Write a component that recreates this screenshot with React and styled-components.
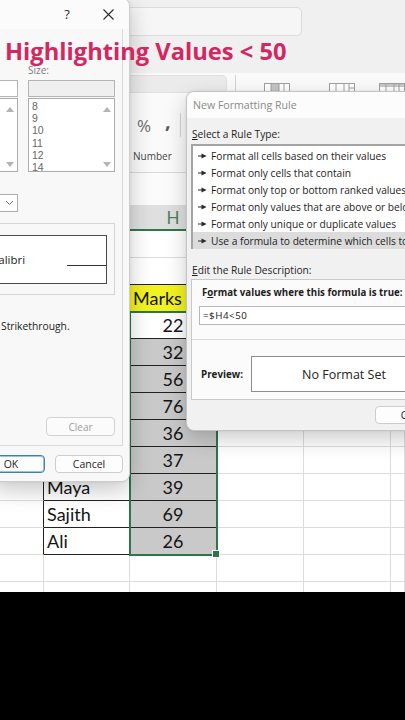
import React from 'react';
import styled, { createGlobalStyle } from 'styled-components';

const Global = createGlobalStyle`
  html, body { margin: 0; padding: 0; background: #000; }
  body { width: 405px; height: 720px; overflow: hidden; font-family: "Open Sans", "Noto Sans", sans-serif; }
  #root { width: 405px; height: 720px; }
`;

const Screen = styled.div`
  position: relative;
  width: 405px;
  height: 720px;
  overflow: hidden;
  background: #000;
`;

/* ---------- Excel window ---------- */
const Excel = styled.div`
  position: relative;
  height: 592px;
  background: #f0f0f0;
  display: flex;
  flex-direction: column;
  overflow: hidden;
`;

const TopBar = styled.div`
  flex: none;
  height: 73px;
  box-sizing: border-box;
  padding: 7px 0 0 110px;
`;

const SearchBox = styled.div`
  width: 192px;
  height: 29px;
  box-sizing: border-box;
  border: 1px solid #dcdcdc;
  border-radius: 5px;
  background: #f6f6f6;
`;

const Ribbon = styled.div`
  flex: none;
  height: 100px;
  box-sizing: border-box;
  background: #fafafa;
  border-bottom: 1px solid #d9d9d9;
  display: flex;
  align-items: flex-start;
  padding-left: 130px;
`;

const NumberGroup = styled.div`
  width: 98px;
  display: flex;
  flex-direction: column;
`;

const FormatBox = styled.div`
  height: 16px;
  margin-top: 2px;
  background: #ebebeb;
  border: 1px solid #e0e0e0;
  border-left: none;
  border-radius: 0 5px 5px 0;
`;

const SymbolRow = styled.div`
  display: flex;
  align-items: center;
  height: 24px;
  margin-top: 20px;
`;

const Percent = styled.span`
  margin-left: 7px;
  font-size: 17px;
  color: #6e6e6e;
  line-height: 1;
`;

const Comma = styled.span`
  margin-left: 14px;
  font-size: 20px;
  font-weight: 700;
  color: #5a5a5a;
  line-height: 1;
  margin-top: -8px;
`;

const RibbonDivider = styled.div`
  width: 1px;
  height: ${p => p.$h || 24}px;
  background: #d3d3d3;
  margin-left: ${p => p.$ml || 0}px;
  margin-top: ${p => p.$mt || 0}px;
  flex: none;
`;

const GroupLabel = styled.div`
  margin-top: 12px;
  margin-left: 3px;
  font-size: 10px;
  line-height: 14px;
  color: #444;
`;

const RibbonIcon = styled.svg`
  flex: none;
  margin-top: 10px;
  margin-left: ${p => p.$ml}px;
`;

const FormulaArea = styled.div`
  flex: none;
  height: 32px;
  background: #fbfbfb;
`;

const COLS = '44px 86px 87px 87px 87px 1fr';

const ColHeaders = styled.div`
  flex: none;
  display: grid;
  grid-template-columns: ${COLS};
  height: 26px;
`;

const HeaderCell = styled.div`
  box-sizing: border-box;
  background: ${p => (p.$sel ? '#dfdfdf' : '#ededed')};
  border-right: 1px solid #d2d2d2;
  border-bottom: 2px solid ${p => (p.$sel ? '#2b7a4f' : '#d2d2d2')};
  display: flex;
  align-items: center;
  justify-content: center;
  font-family: Lato, "Open Sans", sans-serif;
  font-size: 17px;
  color: ${p => (p.$sel ? '#4b7f60' : '#666')};
`;

const Grid = styled.div`
  position: relative;
  display: grid;
  grid-template-columns: ${COLS};
  grid-auto-rows: 27px;
  background: #fff;
`;

const Cell = styled.div`
  box-sizing: border-box;
  background: ${p => p.$fill};
  border-right: 1px solid ${p => (p.$rd ? '#222' : '#dddddd')};
  border-bottom: 1px solid ${p => (p.$bd ? '#222' : '#dddddd')};
  font-family: Lato, "Open Sans", sans-serif;
  font-size: 18px;
  line-height: 26px;
  color: #141414;
  padding: 0 3px;
  text-align: ${p => (p.$num ? 'center' : 'left')};
  white-space: nowrap;
  overflow: hidden;
`;

const SelectionFrame = styled.div`
  position: absolute;
  left: 129px;
  top: 80px;
  width: 89px;
  height: 245px;
  box-sizing: border-box;
  border: 2px solid #2a774d;
  pointer-events: none;
`;

const FillHandle = styled.div`
  position: absolute;
  right: -4px;
  bottom: -4px;
  width: 6px;
  height: 6px;
  background: #2a774d;
  border: 1px solid #fff;
`;

/* ---------- Format Cells dialog (left) ---------- */
const FontDialog = styled.div`
  position: absolute;
  left: -8px;
  top: -2px;
  width: 138px;
  height: 484px;
  box-sizing: border-box;
  background: #f8f8f8;
  border: 1px solid #cdcdcd;
  border-radius: 8px;
  box-shadow: 0 8px 22px rgba(0, 0, 0, 0.22), 0 0 3px rgba(0, 0, 0, 0.08);
  display: flex;
  flex-direction: column;
  overflow: hidden;
  z-index: 3;
`;

const DlgTitleBar = styled.div`
  flex: none;
  height: 30px;
  display: flex;
  justify-content: flex-end;
  align-items: center;
  gap: 15px;
  padding-right: 8px;
  background: #fbfbfb;
`;

const TitleBtn = styled.div`
  width: 26px;
  height: 24px;
  display: flex;
  align-items: center;
  justify-content: center;
  font-size: 13px;
  color: #2c2c2c;
`;

const TabPage = styled.div`
  flex: 1;
  margin-right: 6px;
  border-right: 1px solid #dadada;
  border-bottom: 1px solid #dadada;
  padding: 35px 7px 0 0;
  display: flex;
  flex-direction: column;
`;

const FontRow = styled.div`
  display: grid;
  grid-template-columns: 25px 87px;
  column-gap: 10px;
`;

const FieldCol = styled.div`
  display: flex;
  flex-direction: column;
`;

const FieldLabel = styled.div`
  height: 12px;
  margin-bottom: 4px;
  font-size: 10px;
  line-height: 12px;
  color: #7a7a7a;
`;

const FieldInput = styled.div`
  height: 17px;
  box-sizing: border-box;
  border: 1px solid #b4b4b4;
  background: ${p => (p.$gray ? '#efefef' : '#fff')};
`;

const ListBox = styled.div`
  height: 74px;
  margin-top: 1px;
  box-sizing: border-box;
  border: 1px solid #adadad;
  background: #fff;
  display: flex;
  overflow: hidden;
`;

const ListItems = styled.div`
  flex: 1;
  padding: 1px 0 0 3px;
  display: flex;
  flex-direction: column;
`;

const ListItem = styled.div`
  font-family: "Liberation Sans", Arial, sans-serif;
  font-size: 10.5px;
  line-height: 12.2px;
  height: 12.2px;
  color: #666;
`;

const ScrollBar = styled.div`
  flex: none;
  width: 14px;
  display: flex;
  flex-direction: column;
  align-items: center;
  justify-content: space-between;
  padding: 8px 0 4px;
`;

const DropBox = styled.div`
  width: 25px;
  height: 18px;
  margin-top: 22px;
  box-sizing: border-box;
  border: 1px solid #adadad;
  background: #fff;
  display: flex;
  align-items: center;
  justify-content: flex-end;
  padding-right: 3px;
`;

const PreviewGroup = styled.div`
  height: 72px;
  margin-top: 11px;
  box-sizing: border-box;
  border: 1px solid #d5d5d5;
  padding: 11px 7px 0 0;
`;

const PreviewBox = styled.div`
  height: 49px;
  box-sizing: border-box;
  border: 1px solid #4a4a4a;
  background: #fff;
  display: flex;
  align-items: center;
`;

const PreviewFont = styled.span`
  margin-left: -4px;
  font-size: 11.5px;
  color: #222;
`;

const PreviewLine = styled.div`
  width: 39px;
  height: 1px;
  margin-left: auto;
  margin-top: 11px;
  background: #333;
`;

const NoteText = styled.div`
  margin-top: 25px;
  margin-left: 8px;
  font-size: 10.3px;
  line-height: 12px;
  color: #222;
  white-space: nowrap;
`;

const ClearBtn = styled.div`
  align-self: flex-end;
  margin-top: auto;
  margin-bottom: 9px;
  width: 69px;
  height: 19px;
  box-sizing: border-box;
  border: 1px solid #d2d2d2;
  border-radius: 4px;
  background: #fbfbfb;
  color: #9d9d9d;
  font-size: 10px;
  display: flex;
  align-items: center;
  justify-content: center;
`;

const DlgFooter = styled.div`
  flex: none;
  height: 35px;
  box-sizing: border-box;
  display: flex;
  justify-content: flex-end;
  align-items: flex-start;
  gap: 10px;
  padding: 9px 6px 0 0;
`;

const DlgButton = styled.div`
  width: ${p => p.$w || 68}px;
  height: 18px;
  box-sizing: border-box;
  border: 1px solid ${p => (p.$primary ? '#3f80b0' : '#cdcdcd')};
  box-shadow: ${p => (p.$primary ? 'inset 0 0 0 1px #9cc3de' : 'none')};
  border-radius: 4px;
  background: #fdfdfd;
  font-size: 10.5px;
  color: #1e1e1e;
  display: flex;
  align-items: center;
  justify-content: center;
  flex: none;
`;

/* ---------- New Formatting Rule dialog (right) ---------- */
const RuleDialog = styled.div`
  position: absolute;
  left: 186px;
  top: 91px;
  width: 270px;
  height: 340px;
  box-sizing: border-box;
  background: #f1f1f1;
  border: 1px solid #c4c4c4;
  border-radius: 8px;
  box-shadow: 0 8px 22px rgba(0, 0, 0, 0.2), 0 0 3px rgba(0, 0, 0, 0.08);
  display: flex;
  flex-direction: column;
  overflow: hidden;
  z-index: 3;
`;

const RuleTitle = styled.div`
  flex: none;
  height: 26px;
  background: #fcfcfc;
  padding-left: 6px;
  display: flex;
  align-items: center;
  font-size: 10.6px;
  color: #8a8a8a;
`;

const RuleBody = styled.div`
  padding: 10px 0 0 4px;
  display: flex;
  flex-direction: column;
`;

const SectionLabel = styled.div`
  margin-left: 1px;
  margin-top: ${p => p.$mt || 0}px;
  font-size: ${p => (p.$bold ? 9.7 : 10.2)}px;
  line-height: 12px;
  color: #1d1d1d;
  white-space: nowrap;
  font-weight: ${p => (p.$bold ? 700 : 400)};
`;

const RuleList = styled.div`
  margin-top: 4px;
  height: 105px;
  box-sizing: border-box;
  border: 2px solid #a4a4a4;
  background: #fff;
  padding-top: 1px;
  display: flex;
  flex-direction: column;
`;

const RuleItem = styled.div`
  height: 17px;
  flex: none;
  display: flex;
  align-items: center;
  gap: 4px;
  padding-left: 5px;
  background: ${p => (p.$sel ? '#dcdcdc' : 'transparent')};
  font-size: 10.2px;
  color: #1d1d1d;
  white-space: nowrap;
`;

const ItemArrow = styled.svg`
  flex: none;
  width: 9px;
  height: 6px;
`;

const DescGroup = styled.div`
  margin-top: 3px;
  height: 121px;
  box-sizing: border-box;
  border: 1px solid #c9c9c9;
  background: #fbfbfb;
  padding: 7px 0 0 9px;
  display: flex;
  flex-direction: column;
`;

const FormulaInput = styled.div`
  margin-top: 7px;
  margin-left: -2px;
  height: 19px;
  box-sizing: border-box;
  border: 1px solid #b7b7b7;
  background: #fff;
  padding-left: 3px;
  display: flex;
  align-items: center;
  font-size: 9.8px;
  letter-spacing: 0.5px;
  color: #222;
`;

const Separator = styled.div`
  margin-top: 14px;
  margin-left: -9px;
  height: 1px;
  background: #d8d8d8;
`;

const PreviewRow = styled.div`
  margin-top: 16px;
  height: 36px;
  display: flex;
  align-items: center;
`;

const PreviewLabel = styled.div`
  width: 50px;
  flex: none;
  font-size: 9.8px;
  font-weight: 700;
  color: #1d1d1d;
`;

const RulePreview = styled.div`
  width: 186px;
  height: 36px;
  flex: none;
  box-sizing: border-box;
  border: 1px solid #8e8e8e;
  background: #fff;
  display: flex;
  align-items: center;
  justify-content: center;
  font-size: 12.5px;
  color: #222;
`;

const RuleButtons = styled.div`
  margin-top: 6px;
  padding-left: 184px;
  display: flex;
`;

/* ---------- Headline ---------- */
const Headline = styled.div`
  position: absolute;
  left: 5px;
  top: 40px;
  z-index: 5;
  font-family: "Open Sans", "Noto Sans", sans-serif;
  font-weight: 700;
  font-size: 23.7px;
  line-height: 1;
  color: #d3275f;
  white-space: nowrap;
`;

/* ---------- icons ---------- */
const Arrow = () => (
  <ItemArrow viewBox="0 0 9 6">
    <path d="M0 3h4" stroke="#2a2a2a" strokeWidth="1.2" />
    <path d="M3.5 0.6 L8.6 3 L3.5 5.4Z" fill="#2a2a2a" />
  </ItemArrow>
);

const Tri = ({ down }) => (
  <svg width="8" height="5" viewBox="0 0 8 5">
    <path d={down ? 'M0 0 L8 0 L4 5Z' : 'M0 5 L8 5 L4 0Z'} fill="#b4b4b4" />
  </svg>
);

const Chevron = () => (
  <svg width="9" height="6" viewBox="0 0 9 6">
    <polyline points="1,1 4.5,4.5 8,1" fill="none" stroke="#666" strokeWidth="1" />
  </svg>
);

const CloseX = () => (
  <svg width="11" height="11" viewBox="0 0 11 11">
    <path d="M0.5 0.5 L10.5 10.5 M10.5 0.5 L0.5 10.5" stroke="#2c2c2c" strokeWidth="1.1" />
  </svg>
);

const TableIcon = ({ variant, ml }) => (
  <RibbonIcon $ml={ml} width="26" height="10" viewBox="0 0 26 10">
    <rect x="0.5" y="0.5" width="25" height="9" fill="#fff" stroke="#a0a0a0" />
    {variant === 0 && <rect x="7" y="1" width="8" height="8" fill="#c4c4c4" />}
    {variant === 2 && <rect x="1" y="1" width="24" height="3" fill="#c8c8c8" />}
    <path d="M7 0.5v9M15 0.5v9M20 0.5v9" stroke="#a0a0a0" />
    {variant === 1 && <path d="M20 5h6" stroke="#a0a0a0" />}
  </RibbonIcon>
);

/* ---------- data ---------- */
const marks = { 4: '22', 5: '32', 6: '56', 7: '76', 8: '36', 9: '37', 10: '39', 11: '69', 12: '26' };
const names = { 10: 'Maya', 11: 'Sajith', 12: 'Ali' };
const headers = ['', '', 'H', '', '', ''];
const sizes = ['8', '9', '10', '11', '12', '14'];
const ruleTypes = [
  'Format all cells based on their values',
  'Format only cells that contain',
  'Format only top or bottom ranked values',
  'Format only values that are above or below average',
  'Format only unique or duplicate values',
  'Use a formula to determine which cells to format',
];

function buildCells() {
  const out = [];
  for (let r = 1; r <= 14; r++) {
    for (let c = 0; c < 6; c++) {
      let text = '';
      if (c === 2 && r === 3) text = 'Marks';
      else if (c === 2 && marks[r]) text = marks[r];
      else if (c === 1 && names[r]) text = names[r];
      let fill = '#fff';
      if (r === 3 && (c === 1 || c === 2)) fill = '#f2f220';
      else if (c === 2 && r >= 5 && r <= 12) fill = '#c9c9c9';
      const rd = r >= 3 && r <= 12 && c <= 2;
      const bd = r >= 2 && r <= 12 && (c === 1 || c === 2);
      out.push(
        <Cell key={`${r}-${c}`} $fill={fill} $rd={rd} $bd={bd} $num={c === 2 && r >= 4}>
          {text}
        </Cell>
      );
    }
  }
  return out;
}

export default function App() {
  return (
    <Screen>
      <Global />
      <Excel>
        <TopBar>
          <SearchBox />
        </TopBar>
        <Ribbon>
          <NumberGroup>
            <FormatBox />
            <SymbolRow>
              <Percent>%</Percent>
              <Comma>,</Comma>
              <RibbonDivider $ml={9} />
            </SymbolRow>
            <GroupLabel>Number</GroupLabel>
          </NumberGroup>
          <RibbonDivider $ml={8} $mt={2} $h={22} />
          <TableIcon variant={0} ml={28} />
          <TableIcon variant={1} ml={39} />
          <TableIcon variant={2} ml={24} />
        </Ribbon>
        <FormulaArea />
        <ColHeaders>
          {headers.map((h, i) => (
            <HeaderCell key={i} $sel={i === 2}>{h}</HeaderCell>
          ))}
        </ColHeaders>
        <Grid>
          {buildCells()}
          <SelectionFrame>
            <FillHandle />
          </SelectionFrame>
        </Grid>
      </Excel>

      <FontDialog>
        <DlgTitleBar>
          <TitleBtn>?</TitleBtn>
          <TitleBtn><CloseX /></TitleBtn>
        </DlgTitleBar>
        <TabPage>
          <FontRow>
            <FieldCol>
              <FieldLabel />
              <FieldInput />
              <ListBox>
                <ListItems />
                <ScrollBar><Tri /><Tri down /></ScrollBar>
              </ListBox>
            </FieldCol>
            <FieldCol>
              <FieldLabel>Size:</FieldLabel>
              <FieldInput $gray />
              <ListBox>
                <ListItems>
                  {sizes.map(s => <ListItem key={s}>{s}</ListItem>)}
                </ListItems>
                <ScrollBar><Tri /><Tri down /></ScrollBar>
              </ListBox>
            </FieldCol>
          </FontRow>
          <DropBox><Chevron /></DropBox>
          <PreviewGroup>
            <PreviewBox>
              <PreviewFont>Calibri</PreviewFont>
              <PreviewLine />
            </PreviewBox>
          </PreviewGroup>
          <NoteText>Strikethrough.</NoteText>
          <ClearBtn>Clear</ClearBtn>
        </TabPage>
        <DlgFooter>
          <DlgButton $primary>OK</DlgButton>
          <DlgButton>Cancel</DlgButton>
        </DlgFooter>
      </FontDialog>

      <RuleDialog>
        <RuleTitle>New Formatting Rule</RuleTitle>
        <RuleBody>
          <SectionLabel><u>S</u>elect a Rule Type:</SectionLabel>
          <RuleList>
            {ruleTypes.map((t, i) => (
              <RuleItem key={t} $sel={i === ruleTypes.length - 1}>
                <Arrow />
                {t}
              </RuleItem>
            ))}
          </RuleList>
          <SectionLabel $mt={15}><u>E</u>dit the Rule Description:</SectionLabel>
          <DescGroup>
            <SectionLabel $bold>F<u>o</u>rmat values where this formula is true:</SectionLabel>
            <FormulaInput>=$H4&lt;50</FormulaInput>
            <Separator />
            <PreviewRow>
              <PreviewLabel>Preview:</PreviewLabel>
              <RulePreview>No Format Set</RulePreview>
            </PreviewRow>
          </DescGroup>
          <RuleButtons>
            <DlgButton $w={66}>OK</DlgButton>
          </RuleButtons>
        </RuleBody>
      </RuleDialog>

      <Headline>Highlighting Values &lt; 50</Headline>
    </Screen>
  );
}
